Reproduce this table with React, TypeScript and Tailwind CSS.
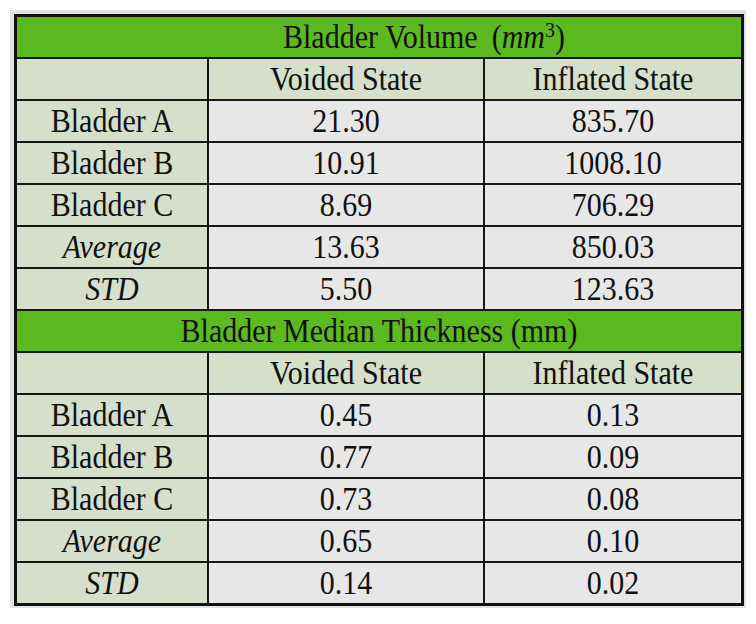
import React from "react";

type Row = { label: string; voided: string; inflated: string; italic?: boolean };

const volumeRows: Row[] = [
  { label: "Bladder A", voided: "21.30", inflated: "835.70" },
  { label: "Bladder B", voided: "10.91", inflated: "1008.10" },
  { label: "Bladder C", voided: "8.69", inflated: "706.29" },
  { label: "Average", voided: "13.63", inflated: "850.03", italic: true },
  { label: "STD", voided: "5.50", inflated: "123.63", italic: true },
];

const thicknessRows: Row[] = [
  { label: "Bladder A", voided: "0.45", inflated: "0.13" },
  { label: "Bladder B", voided: "0.77", inflated: "0.09" },
  { label: "Bladder C", voided: "0.73", inflated: "0.08" },
  { label: "Average", voided: "0.65", inflated: "0.10", italic: true },
  { label: "STD", voided: "0.14", inflated: "0.02", italic: true },
];

// the screenshot's text is a little taller than it is wide
function Txt({ children, italic }: { children?: React.ReactNode; italic?: boolean }) {
  return (
    <span className={"inline-block scale-y-[1.1] whitespace-nowrap" + (italic ? " italic" : "")}>
      {children}
    </span>
  );
}

function Cell({ children, bg, italic }: { children?: React.ReactNode; bg: string; italic?: boolean }) {
  return (
    <div className={"h-[40px] flex items-center justify-center " + bg}>
      <Txt italic={italic}>{children}</Txt>
    </div>
  );
}

function Section({ title, rows, shift }: { title: React.ReactNode; rows: Row[]; shift?: boolean }) {
  return (
    <>
      {/* green title bar across all columns */}
      <div
        className={
          "col-span-3 h-[40px] flex items-center justify-center bg-[#5cb91f] " +
          (shift ? "pl-[90px]" : "")
        }
      >
        <Txt>{title}</Txt>
      </div>
      <Cell bg="bg-[#d5dfcb]" />
      <Cell bg="bg-[#d5dfcb]">Voided State</Cell>
      <Cell bg="bg-[#d5dfcb]">Inflated State</Cell>
      {rows.map((r) => (
        <React.Fragment key={r.label}>
          <Cell bg="bg-[#d5dfcb]" italic={r.italic}>
            {r.label}
          </Cell>
          <Cell bg="bg-[#e7e7e7]">{r.voided}</Cell>
          <Cell bg="bg-[#e7e7e7]">{r.inflated}</Cell>
        </React.Fragment>
      ))}
    </>
  );
}

export default function App() {
  return (
    <div className="w-[756px] h-[624px] bg-white pt-[10px] pl-[10px] font-serif text-[30px] leading-none text-[#111]">
      <div className="w-fit border-l-4 border-t-4 border-r-2 border-b-2 border-[#e2e2e2]">
        <div className="grid grid-cols-[190px_274px_256px] gap-[2px] bg-[#161616] border-[3px] border-[#111] font-[family-name:Liberation_Serif,Tinos,Times_New_Roman,Georgia,Cambria,serif]">
          <Section
            shift
            title={
              <>
                Bladder Volume
                <span className="ml-[14px]">(</span>
                <span className="italic">mm</span>
                <span className="relative -top-[10px] text-[20px]">3</span>)
              </>
            }
            rows={volumeRows}
          />
          <Section title="Bladder Median Thickness (mm)" rows={thicknessRows} />
        </div>
      </div>
    </div>
  );
}
